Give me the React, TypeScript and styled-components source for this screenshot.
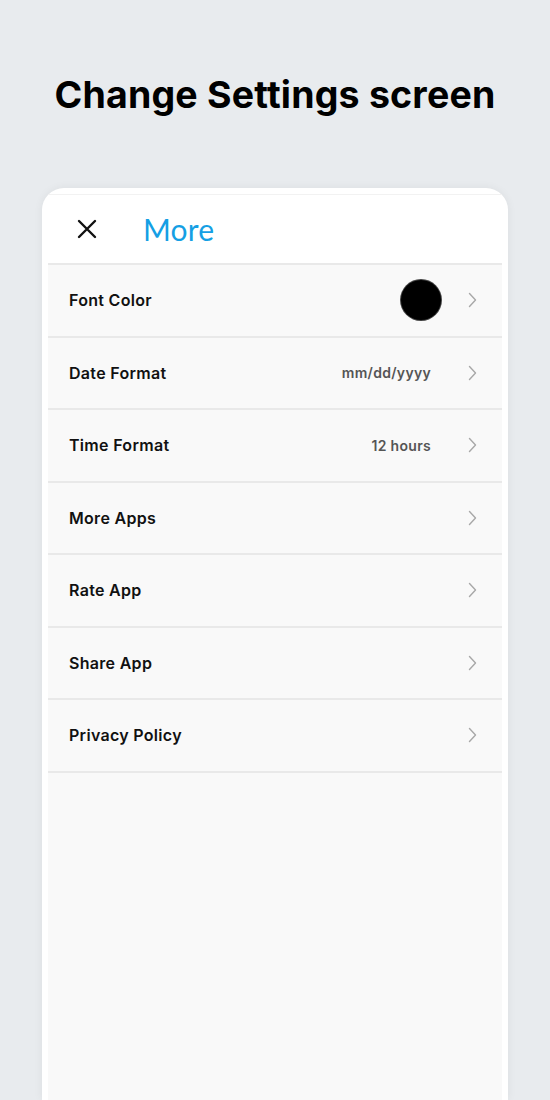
import React from "react";
import styled, { createGlobalStyle } from "styled-components";

const GlobalStyle = createGlobalStyle`
  html, body {
    margin: 0;
    padding: 0;
    background: #e8ebee;
  }
  * {
    box-sizing: border-box;
  }
`;

interface SettingItem {
  label: string;
  value?: string;
  swatch?: string;
}

const items: SettingItem[] = [
  { label: "Font Color", swatch: "#000000" },
  { label: "Date Format", value: "mm/dd/yyyy" },
  { label: "Time Format", value: "12 hours" },
  { label: "More Apps" },
  { label: "Rate App" },
  { label: "Share App" },
  { label: "Privacy Policy" },
];

const CloseIcon = () => (
  <svg width="20" height="20" viewBox="0 0 20 20" fill="none">
    <path
      d="M2 2 L18 18 M18 2 L2 18"
      stroke="#111"
      strokeWidth="2.4"
      strokeLinecap="round"
    />
  </svg>
);

const Chevron = () => (
  <svg width="9" height="16" viewBox="0 0 9 16" fill="none">
    <path
      d="M1.5 1.5 L7.5 8 L1.5 14.5"
      stroke="#a8a8a8"
      strokeWidth="1.4"
      strokeLinecap="round"
      strokeLinejoin="round"
    />
  </svg>
);

const App: React.FC = () => {
  return (
    <>
      <GlobalStyle />
      <Page>
        <Title>Change Settings screen</Title>
        <Card>
          <Screen>
            <Header>
              <CloseButton>
                <CloseIcon />
              </CloseButton>
              <HeaderTitle>More</HeaderTitle>
            </Header>
            <List>
              {items.map((item) => (
                <Row key={item.label}>
                  <Label>{item.label}</Label>
                  {item.swatch && <Swatch color={item.swatch} />}
                  {item.value && <Value>{item.value}</Value>}
                  <Chevron />
                </Row>
              ))}
            </List>
          </Screen>
        </Card>
      </Page>
    </>
  );
};

const Page = styled.div`
  height: 1100px;
  overflow: hidden;
  display: flex;
  flex-direction: column;
  background: #e8ebee;
`;

const Title = styled.h1`
  margin: 0;
  padding-top: 73px;
  height: 188px;
  text-align: center;
  font-family: "Inter", "Liberation Sans", sans-serif;
  font-weight: 700;
  font-size: 37.5px;
  line-height: 44px;
  color: #000;
  letter-spacing: 0.2px;
`;

const Card = styled.div`
  flex: 1;
  margin: 0 42px;
  padding: 6px 6px 0;
  background: #ffffff;
  border-radius: 22px 22px 0 0;
  box-shadow: 0 0 10px rgba(0, 20, 40, 0.06);
  display: flex;
  flex-direction: column;
`;

const Screen = styled.div`
  flex: 1;
  display: flex;
  flex-direction: column;
  background: #f9f9f9;
  border-top: 1px solid #f2f2f2;
`;

const Header = styled.header`
  height: 70px;
  display: flex;
  align-items: center;
  background: #ffffff;
  border-bottom: 2px solid #e9e9e9;
`;

const CloseButton = styled.div`
  width: 20px;
  height: 20px;
  margin-left: 29px;
  display: flex;
`;

const HeaderTitle = styled.span`
  margin-left: 46px;
  font-family: "Lato", "Liberation Sans", sans-serif;
  font-weight: 400;
  font-size: 30px;
  color: #159fe4;
  letter-spacing: 0.2px;
`;

const List = styled.ul`
  list-style: none;
  margin: 0;
  padding: 0;
`;

const Row = styled.li`
  height: 72.5px;
  display: flex;
  align-items: center;
  padding: 0 25px 0 21px;
  border-bottom: 2px solid #e9e9e9;
`;

const Label = styled.span`
  flex: 1;
  font-family: "Inter", "Liberation Sans", sans-serif;
  font-weight: 600;
  font-size: 16px;
  letter-spacing: 0.3px;
  color: #111;
`;

const Value = styled.span`
  margin-right: 37px;
  font-family: "Inter", "Liberation Sans", sans-serif;
  font-weight: 600;
  font-size: 14px;
  letter-spacing: 0.3px;
  color: #555;
`;

const Swatch = styled.span<{ color: string }>`
  width: 40px;
  height: 40px;
  margin-right: 27px;
  border-radius: 50%;
  background: ${(p) => p.color};
  box-shadow: 0 0 0 1px #444;
`;

export default App;
